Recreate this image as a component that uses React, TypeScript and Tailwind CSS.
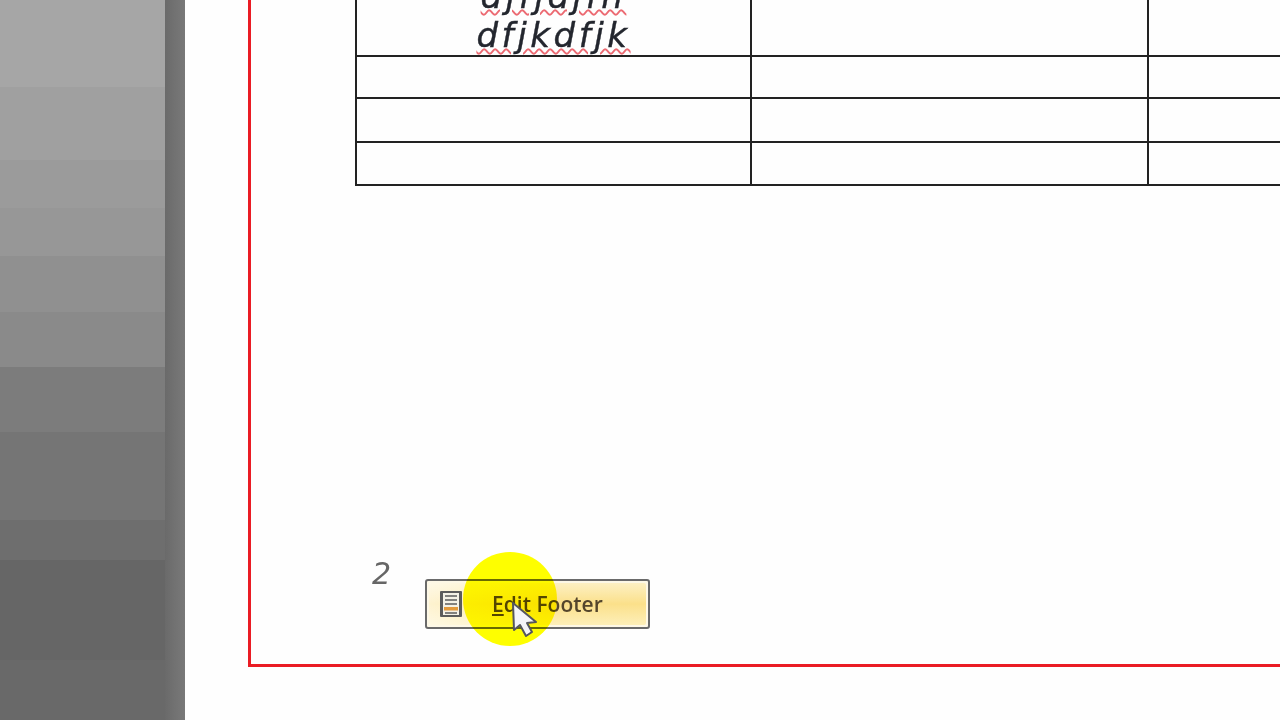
const bands = [
  "h-[87px] bg-[#a6a6a6]",
  "h-[73px] bg-[#a0a0a0]",
  "h-[48px] bg-[#9b9b9b]",
  "h-[48px] bg-[#979797]",
  "h-[56px] bg-[#909090]",
  "h-[55px] bg-[#8a8a8a]",
  "h-[65px] bg-[#7c7c7c]",
  "h-[88px] bg-[#757575]",
  "h-[40px] bg-[#6e6e6e]",
  "h-[100px] bg-[#666666]",
  "flex-1 bg-[#696969]",
];

function Sidebar() {
  return (
    <div className="flex h-full w-[185px] shrink-0">
      <div className="flex w-[165px] flex-col">
        {bands.map((band) => (
          <div key={band} className={band} />
        ))}
      </div>
      <div className="w-[20px] bg-gradient-to-r from-[#6a6a6a] via-[#727272] to-[#797979]" />
    </div>
  );
}

function Row({ className, children }: { className: string; children?: React.ReactNode }) {
  return (
    <div className={`flex border-b-2 border-[#222] ${className}`}>
      <div className="flex w-[395px] shrink-0 flex-col items-center justify-end border-r-2 border-[#222]">
        {children}
      </div>
      <div className="w-[397px] shrink-0 border-r-2 border-[#222]" />
      <div className="flex-1" />
    </div>
  );
}

function Misspelt({ text }: { text: string }) {
  return (
    <span className="font-['DejaVu_Sans',sans-serif] text-[34px] leading-[39px] tracking-[3.6px] text-[#23262e] italic underline decoration-[#ec6a72] decoration-wavy decoration-[1.5px] underline-offset-[1px] [-webkit-text-stroke:0.4px_#23262e]">
      {text}
    </span>
  );
}

function FooterIcon() {
  return (
    <svg width="22" height="26" viewBox="0 0 22 26" className="relative shrink-0">
      <rect x="0" y="0" width="22" height="26" rx="1" fill="#5c5c5c" />
      <rect x="3" y="2" width="16" height="22" fill="#f4f1e6" />
      <path d="M5 5h12M5 9h12M5 13h12" stroke="#5c5c5c" strokeWidth="1.5" />
      <rect x="4" y="16" width="14" height="3.5" fill="#e39a3c" />
      <path d="M5 22h12" stroke="#5c5c5c" strokeWidth="1.5" />
    </svg>
  );
}

function EditFooter() {
  return (
    <div className="relative h-[50px] w-[225px] rounded-[3px] border-2 border-[#6a6a6a] bg-[#fdf8e6] p-[2px]">
      <div className="relative flex h-full items-center rounded-[2px] bg-gradient-to-b from-[#fdf0c2] via-[#fbe08a] to-[#fdefb8] pl-[11px]">
        <div className="absolute inset-y-0 left-0 w-[130px] bg-gradient-to-r from-white/60 to-transparent" />
        <FooterIcon />
        <span className="relative top-[1px] ml-[30px] font-['Open_Sans',sans-serif] text-[21px] font-semibold text-[#54462c]">
          <span className="underline">E</span>dit Footer
        </span>
      </div>
      <div className="pointer-events-none absolute top-[-29px] left-[36px] h-[94px] w-[94px] rounded-full bg-[#ffff00] mix-blend-multiply" />
      <svg width="30" height="40" viewBox="0 0 30 40" className="absolute top-[18px] left-[83px]">
        <path
          d="M3 4 L4 31 L10 26 L16 37 L22 33 L17 24 L26 23 Z"
          fill="#f4f4f8"
          stroke="#55565e"
          strokeWidth="2"
          strokeLinejoin="round"
        />
      </svg>
    </div>
  );
}

export default function App() {
  return (
    <div className="flex h-screen w-full overflow-hidden bg-[#fefefe] blur-[0.5px]">
      <Sidebar />
      <div className="h-full min-w-0 flex-1 pb-[53px] pl-[63px]">
        <div className="flex h-full flex-col overflow-hidden border-b-[3px] border-l-[3px] border-[#ea1c24]">
          <div className="mt-[-43px] ml-[104px] w-[1100px] border-l-2 border-[#222]">
            <Row className="h-[100px]">
              <Misspelt text="djfjdjfh" />
              <Misspelt text="dfjkdfjk" />
            </Row>
            <Row className="h-[42px]" />
            <Row className="h-[44px]" />
            <Row className="h-[43px]" />
          </div>
          <div className="mt-auto flex items-start pb-[35px] pl-[121px]">
            <span className="mt-[-23px] w-[53px] font-['DejaVu_Sans',sans-serif] text-[30px] leading-[36px] text-[#666] italic">
              2
            </span>
            <EditFooter />
          </div>
        </div>
      </div>
    </div>
  );
}
